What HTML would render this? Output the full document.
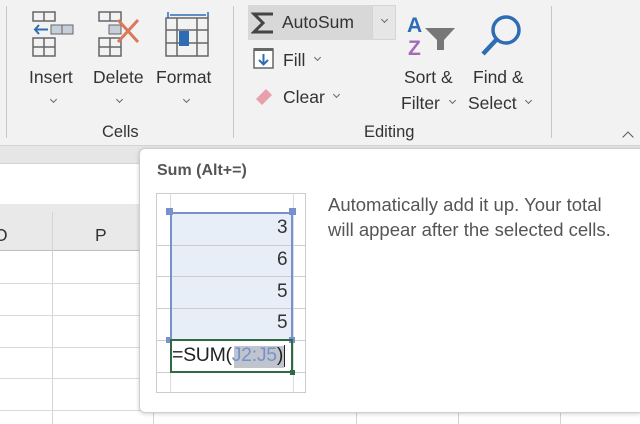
<!DOCTYPE html><html><head><style>
body{margin:0;width:640px;height:424px;overflow:hidden;background:#fff;font-family:"Liberation Sans",sans-serif;position:relative}
.a{position:absolute}
.t{color:#333;font-size:17.5px;white-space:nowrap}
.c{width:4px;height:4px;border-right:1.3px solid #666;border-bottom:1.3px solid #666;transform:rotate(45deg)}
</style></head><body>
<div class="a" style="left:0;top:0;width:640px;height:145px;background:#f2f2f2;border-bottom:1px solid #d4d4d4"></div>
<div class="a" style="left:6px;top:6px;width:1px;height:132px;background:#c8c8c8"></div>
<div class="a" style="left:233px;top:6px;width:1px;height:132px;background:#c8c8c8"></div>
<div class="a" style="left:551px;top:6px;width:1px;height:132px;background:#c8c8c8"></div>
<svg class="a" style="left:30px;top:10px" width="180" height="50">
<g fill="none" stroke="#666" stroke-width="1.5">
<rect x="3" y="2" width="22" height="9"/><line x1="14" y1="2" x2="14" y2="11"/>
<rect x="3" y="28" width="22" height="18"/><line x1="14" y1="28" x2="14" y2="46"/><line x1="3" y1="37" x2="25" y2="37"/>
<rect x="69" y="2" width="22" height="9"/><line x1="80" y1="2" x2="80" y2="11"/>
<rect x="69" y="28" width="22" height="18"/><line x1="80" y1="28" x2="80" y2="46"/><line x1="69" y1="37" x2="91" y2="37"/>
<rect x="136" y="8" width="42" height="38"/><line x1="147" y1="8" x2="147" y2="46"/><line x1="167" y1="8" x2="167" y2="46"/><line x1="136" y1="20" x2="178" y2="20"/><line x1="136" y1="33" x2="178" y2="33"/>
</g>
<rect x="21" y="15" width="22" height="9" fill="#c5cfd9" stroke="#666"/><line x1="32" y1="15" x2="32" y2="24" stroke="#666"/>
<path d="M18 19.5H5M9 15l-4 4.5 4 4.5" stroke="#2e6db4" stroke-width="2" fill="none"/>
<rect x="79" y="15" width="12" height="9" fill="#c5cfd9" stroke="#666"/>
<path d="M88 10l20 22M108 10l-20 22" stroke="#d87a5a" stroke-width="3"/>
<rect x="149" y="21" width="10" height="15" fill="#2e6db4"/>
<path d="M138 2v6M178 2v6M140 5h36" stroke="#2e6db4" stroke-width="1.5"/>
</svg>
<div class="a t" style="left:29px;top:67px">Insert</div>
<div class="a t" style="left:93px;top:67px">Delete</div>
<div class="a t" style="left:156px;top:67px">Format</div>
<div class="a c" style="left:51px;top:97px"></div><div class="a c" style="left:117px;top:97px"></div><div class="a c" style="left:184px;top:97px"></div>
<div class="a t" style="left:102px;top:123px;font-size:16.5px">Cells</div>
<div class="a" style="left:248px;top:5px;width:124px;height:35px;background:#d8d8d8"></div>
<div class="a" style="left:372px;top:5px;width:24px;height:35px;background:#e6e6e6;border:1px solid #d4d4d4;box-sizing:border-box"></div>
<svg class="a" style="left:251px;top:11px" width="26" height="24"><path d="M22 3H3l9 9-9 9h19" fill="none" stroke="#444" stroke-width="3" stroke-linejoin="miter"/></svg>
<div class="a t" style="left:282px;top:12px">AutoSum</div>
<div class="a c" style="left:382px;top:17px"></div>
<svg class="a" style="left:253px;top:47px" width="22" height="24"><rect x="1" y="2" width="19" height="19" fill="#fff" stroke="#666" stroke-width="1.5"/><rect x="1" y="1" width="19" height="3" fill="#666"/><path d="M10.5 7v10M6 13l4.5 4.5 4.5-4.5" stroke="#2e6db4" stroke-width="2" fill="none"/></svg>
<div class="a t" style="left:283px;top:50px">Fill</div><div class="a c" style="left:315px;top:55px"></div>
<svg class="a" style="left:253px;top:83px" width="22" height="22"><path d="M3 16l10-10 6 6-10 10z" fill="#e7a0ac"/></svg>
<div class="a t" style="left:283px;top:87px">Clear</div><div class="a c" style="left:334px;top:92px"></div>
<svg class="a" style="left:405px;top:10px" width="52" height="48"><text x="2" y="22" font-family="Liberation Sans" font-weight="bold" font-size="21" fill="#2e6db4">A</text><text x="3" y="45" font-family="Liberation Sans" font-weight="bold" font-size="21" fill="#a66bb8">Z</text><path d="M20 18h30l-11 12v10h-7V30z" fill="#777"/></svg>
<svg class="a" style="left:478px;top:10px" width="48" height="48"><circle cx="28" cy="20" r="13" fill="none" stroke="#2e6db4" stroke-width="3.5"/><path d="M19 29L5 44" stroke="#2e6db4" stroke-width="4.5"/></svg>
<div class="a t" style="left:404px;top:67px">Sort &amp;</div>
<div class="a t" style="left:401px;top:93px">Filter</div><div class="a c" style="left:450px;top:98px"></div>
<div class="a t" style="left:473px;top:67px">Find &amp;</div>
<div class="a t" style="left:468px;top:93px">Select</div><div class="a c" style="left:526px;top:98px"></div>
<div class="a t" style="left:364px;top:123px;font-size:16.5px">Editing</div>
<div class="a" style="left:624px;top:133px;width:7px;height:7px;border-left:1.5px solid #555;border-top:1.5px solid #555;transform:rotate(45deg)"></div>
<div class="a" style="left:0;top:146px;width:640px;height:17px;background:#e6e6e6;border-bottom:1px solid #d4d4d4"></div>
<div class="a" style="left:0;top:204px;width:640px;height:46px;background:#e9e9e9;border-bottom:1px solid #bdbdbd"></div>
<div class="a" style="left:52px;top:212px;width:1px;height:212px;background:#d4d4d4"></div>
<div class="a" style="left:153px;top:212px;width:1px;height:212px;background:#d4d4d4"></div>
<div class="a t" style="left:-6px;top:225px">O</div>
<div class="a t" style="left:95px;top:225px">P</div>
<div class="a" style="left:0;top:283px;width:640px;height:1px;background:#dadada"></div>
<div class="a" style="left:0;top:315px;width:640px;height:1px;background:#dadada"></div>
<div class="a" style="left:0;top:347px;width:640px;height:1px;background:#dadada"></div>
<div class="a" style="left:0;top:378px;width:640px;height:1px;background:#dadada"></div>
<div class="a" style="left:0;top:410px;width:640px;height:1px;background:#dadada"></div>
<div class="a" style="left:356px;top:410px;width:1px;height:14px;background:#d4d4d4"></div>
<div class="a" style="left:458px;top:410px;width:1px;height:14px;background:#d4d4d4"></div>
<div class="a" style="left:560px;top:410px;width:1px;height:14px;background:#d4d4d4"></div>
<div class="a" style="left:139px;top:148px;width:500px;height:263px;background:#fff;border:1px solid #cfcfcf;border-radius:6px 0 0 6px;box-shadow:0 1px 4px rgba(0,0,0,.18)"></div>
<div class="a" style="left:157px;top:162px;font-size:16px;font-weight:bold;color:#555">Sum (Alt+=)</div>
<div class="a" style="left:328px;top:192px;font-size:18.5px;color:#555;line-height:25px;white-space:nowrap">Automatically add it up. Your total<br>will appear after the selected cells.</div>
<div class="a" style="left:156px;top:193px;width:150px;height:200px;border:1px solid #ccc;box-sizing:border-box;background:#fff"></div>
<div class="a" style="left:170px;top:194px;width:1px;height:198px;background:#ddd"></div>
<div class="a" style="left:293px;top:194px;width:1px;height:198px;background:#ddd"></div>
<div class="a" style="left:170px;top:212px;width:123px;height:128px;background:#e8eef8"></div>
<div class="a" style="left:157px;top:245px;width:148px;height:1px;background:#ccc"></div>
<div class="a" style="left:157px;top:276px;width:148px;height:1px;background:#ccc"></div>
<div class="a" style="left:157px;top:308px;width:148px;height:1px;background:#ccc"></div>
<div class="a" style="left:157px;top:340px;width:148px;height:1px;background:#ccc"></div>
<div class="a" style="left:157px;top:372px;width:148px;height:1px;background:#ccc"></div>
<div class="a" style="left:170px;top:212px;width:123px;height:128px;border:2px solid #7891cc;box-sizing:border-box;border-bottom:none"></div>
<div class="a" style="left:166px;top:208px;width:7px;height:7px;background:#7891cc"></div>
<div class="a" style="left:289px;top:208px;width:7px;height:7px;background:#7891cc"></div>
<div class="a" style="left:166px;top:337px;width:6px;height:6px;background:#7891cc"></div>
<div class="a" style="left:289px;top:337px;width:6px;height:6px;background:#7891cc"></div>
<div class="a" style="left:170px;top:339px;width:123px;height:34px;border:2px solid #2f6a45;box-sizing:border-box"></div>
<div class="a" style="left:290px;top:370px;width:5px;height:5px;background:#2f6a45"></div>
<div class="a" style="left:277px;top:217px;font-size:19px;color:#333">3</div>
<div class="a" style="left:277px;top:249px;font-size:19px;color:#333">6</div>
<div class="a" style="left:277px;top:281px;font-size:19px;color:#333">5</div>
<div class="a" style="left:277px;top:312px;font-size:19px;color:#333">5</div>
<div class="a" style="left:234px;top:346px;width:50px;height:22px;background:#c0c4cc"></div>
<div class="a" style="left:172px;top:344px;font-size:19.5px;color:#222;white-space:nowrap;letter-spacing:-0.3px">=SUM(<span style="color:#7891cc">J2:J5</span>)</div>
<div class="a" style="left:284px;top:345px;width:1px;height:22px;background:#222"></div>
</body></html>
